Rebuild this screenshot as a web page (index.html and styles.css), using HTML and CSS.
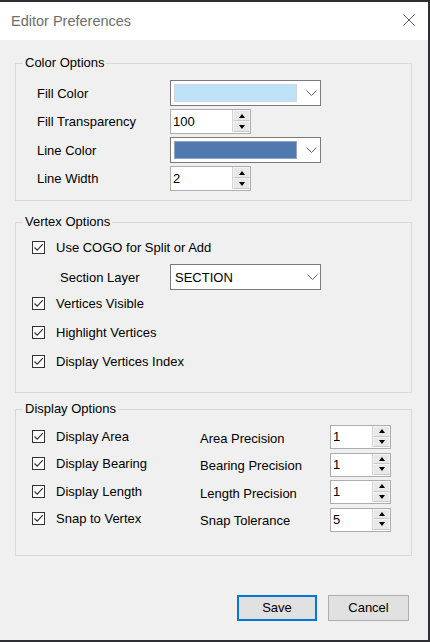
FILE: index.html
```html
<!DOCTYPE html>
<html lang="en">
<head>
<meta charset="utf-8">
<title>Editor Preferences</title>
<link rel="stylesheet" href="styles.css">
</head>
<body>
<div class="window">
  <div class="titlebar">
    <span class="title">Editor Preferences</span>
    <svg class="close" width="12" height="12" viewBox="0 0 12 12"><path d="M0.5 0.5 L11.5 11.5 M11.5 0.5 L0.5 11.5" stroke="#5a5a5a" stroke-width="1" fill="none"/></svg>
  </div>
  <div class="content">
    <fieldset class="group">
      <legend>Color Options</legend>
      <div class="color-grid">
        <span class="lbl">Fill Color</span>
        <div class="combo"><span class="swatch swatch-fill"></span><svg class="chev" width="11" height="6" viewBox="0 0 11 6"><path d="M0.5 0.5 L5.5 5.5 L10.5 0.5" stroke="#606060" fill="none"/></svg></div>
        <span class="lbl">Fill Transparency</span>
        <div class="spin spin-wide"><span class="spin-val">100</span><div class="spin-btns"><span class="sb"><i class="tri-up"></i></span><span class="sb"><i class="tri-down"></i></span></div></div>
        <span class="lbl">Line Color</span>
        <div class="combo"><span class="swatch swatch-line"></span><svg class="chev" width="11" height="6" viewBox="0 0 11 6"><path d="M0.5 0.5 L5.5 5.5 L10.5 0.5" stroke="#606060" fill="none"/></svg></div>
        <span class="lbl">Line Width</span>
        <div class="spin spin-wide"><span class="spin-val">2</span><div class="spin-btns"><span class="sb"><i class="tri-up"></i></span><span class="sb"><i class="tri-down"></i></span></div></div>
      </div>
    </fieldset>

    <fieldset class="group group-vertex">
      <legend>Vertex Options</legend>
      <div class="vertex-body">
        <div class="check-row"><span class="cb"><svg width="11" height="11" viewBox="0 0 11 11"><path d="M1.5 5.5 L4.2 8.2 L9.8 2.2" stroke="#333" stroke-width="1.2" fill="none"/></svg></span><span>Use COGO for Split or Add</span></div>
        <div class="layer-row"><span class="lbl-layer">Section Layer</span><div class="combo combo-text"><span class="combo-val">SECTION</span><svg class="chev" width="11" height="6" viewBox="0 0 11 6"><path d="M0.5 0.5 L5.5 5.5 L10.5 0.5" stroke="#606060" fill="none"/></svg></div></div>
        <div class="check-row after-layer"><span class="cb"><svg width="11" height="11" viewBox="0 0 11 11"><path d="M1.5 5.5 L4.2 8.2 L9.8 2.2" stroke="#333" stroke-width="1.2" fill="none"/></svg></span><span>Vertices Visible</span></div>
        <div class="check-row spaced"><span class="cb"><svg width="11" height="11" viewBox="0 0 11 11"><path d="M1.5 5.5 L4.2 8.2 L9.8 2.2" stroke="#333" stroke-width="1.2" fill="none"/></svg></span><span>Highlight Vertices</span></div>
        <div class="check-row spaced"><span class="cb"><svg width="11" height="11" viewBox="0 0 11 11"><path d="M1.5 5.5 L4.2 8.2 L9.8 2.2" stroke="#333" stroke-width="1.2" fill="none"/></svg></span><span>Display Vertices Index</span></div>
      </div>
    </fieldset>

    <fieldset class="group group-display">
      <legend>Display Options</legend>
      <div class="display-grid">
        <div class="check-row"><span class="cb"><svg width="11" height="11" viewBox="0 0 11 11"><path d="M1.5 5.5 L4.2 8.2 L9.8 2.2" stroke="#333" stroke-width="1.2" fill="none"/></svg></span><span>Display Area</span></div>
        <span class="lbl">Area Precision</span>
        <div class="spin spin-narrow"><span class="spin-val">1</span><div class="spin-btns"><span class="sb"><i class="tri-up"></i></span><span class="sb"><i class="tri-down"></i></span></div></div>

        <div class="check-row"><span class="cb"><svg width="11" height="11" viewBox="0 0 11 11"><path d="M1.5 5.5 L4.2 8.2 L9.8 2.2" stroke="#333" stroke-width="1.2" fill="none"/></svg></span><span>Display Bearing</span></div>
        <span class="lbl">Bearing Precision</span>
        <div class="spin spin-narrow"><span class="spin-val">1</span><div class="spin-btns"><span class="sb"><i class="tri-up"></i></span><span class="sb"><i class="tri-down"></i></span></div></div>

        <div class="check-row"><span class="cb"><svg width="11" height="11" viewBox="0 0 11 11"><path d="M1.5 5.5 L4.2 8.2 L9.8 2.2" stroke="#333" stroke-width="1.2" fill="none"/></svg></span><span>Display Length</span></div>
        <span class="lbl">Length Precision</span>
        <div class="spin spin-narrow"><span class="spin-val">1</span><div class="spin-btns"><span class="sb"><i class="tri-up"></i></span><span class="sb"><i class="tri-down"></i></span></div></div>

        <div class="check-row"><span class="cb"><svg width="11" height="11" viewBox="0 0 11 11"><path d="M1.5 5.5 L4.2 8.2 L9.8 2.2" stroke="#333" stroke-width="1.2" fill="none"/></svg></span><span>Snap to Vertex</span></div>
        <span class="lbl">Snap Tolerance</span>
        <div class="spin spin-narrow"><span class="spin-val">5</span><div class="spin-btns"><span class="sb"><i class="tri-up"></i></span><span class="sb"><i class="tri-down"></i></span></div></div>
      </div>
    </fieldset>

    <div class="actions">
      <button class="btn btn-default">Save</button>
      <button class="btn">Cancel</button>
    </div>
  </div>
</div>
</body>
</html>
```

FILE: styles.css
```css
html, body {
  margin: 0;
  padding: 0;
}
body {
  width: 430px;
  height: 642px;
  overflow: hidden;
  background: #2e2f33;
  font-family: "Liberation Sans", Arial, sans-serif;
  font-size: 13px;
  color: #000;
}
.window {
  margin-top: 2px;
  width: 428px;
  height: 638px;
  background: #f0f0f0;
  display: flex;
  flex-direction: column;
}
.titlebar {
  height: 38px;
  flex: none;
  background: #fff;
  display: flex;
  align-items: center;
  justify-content: space-between;
  padding: 0 13px 0 11px;
}
.title {
  font-size: 14.5px;
  color: #6e6e6e;
}
.close {
  display: block;
  margin-top: -2px;
}
.content {
  padding: 16px 16px 0 15px;
}
.group {
  margin: 0;
  padding: 0;
  border: 1px solid #d9d9d9;
  min-inline-size: 0;
}
.group legend {
  margin-left: 7px;
  padding: 0 2px;
  font-size: 13px;
  line-height: 14px;
}
.group-vertex {
  margin-top: 14px;
}
.group-display {
  margin-top: 9px;
}
.color-grid {
  display: grid;
  grid-template-columns: 133px auto;
  grid-template-rows: 26px 25px 26px 25px;
  row-gap: 3px;
  align-items: center;
  justify-items: start;
  padding: 10px 0 9px 21px;
}
.lbl {
  white-space: nowrap;
}
.combo {
  box-sizing: border-box;
  width: 151px;
  height: 26px;
  border: 1px solid #7a7a7a;
  background: #fff;
  display: flex;
  align-items: center;
  padding: 0 0 0 3px;
}
.swatch {
  box-sizing: border-box;
  width: 123px;
  height: 18px;
  border: 1px solid #cfd6dc;
}
.swatch-fill {
  background: #bee3f9;
}
.swatch-line {
  background: #5179af;
  border-color: #8fa6c6;
}
.chev {
  display: block;
  margin-left: 9px;
}
.combo-text .combo-val {
  width: 123px;
  padding-left: 1px;
}
.spin {
  box-sizing: border-box;
  height: 25px;
  border: 1px solid #adadad;
  background: #fff;
  display: flex;
}
.spin-wide {
  width: 81px;
}
.spin-narrow {
  width: 61px;
  height: 24px;
}
.spin-val {
  flex: 1;
  padding-left: 2px;
  line-height: 23px;
}
.spin-narrow .spin-val {
  line-height: 22px;
}
.spin-btns {
  width: 17px;
  display: flex;
  flex-direction: column;
  margin: 0 0 1px 0;
  border-left: 1px solid #d4d4d4;
}
.sb {
  flex: 1;
  background: #e8e8e8;
  border: 1px solid #f4f4f4;
  border-bottom-color: #c9c9c9;
  display: flex;
  align-items: center;
  justify-content: center;
}
.tri-up {
  width: 0;
  height: 0;
  border-left: 3.5px solid transparent;
  border-right: 3.5px solid transparent;
  border-bottom: 4px solid #000;
}
.tri-down {
  width: 0;
  height: 0;
  border-left: 3.5px solid transparent;
  border-right: 3.5px solid transparent;
  border-top: 4px solid #000;
}
.vertex-body {
  display: flex;
  flex-direction: column;
  padding: 8px 0 21px 16px;
}
.check-row {
  height: 20px;
  display: flex;
  align-items: center;
  gap: 11px;
  white-space: nowrap;
}
.cb {
  box-sizing: border-box;
  width: 13px;
  height: 13px;
  border: 1px solid #333;
  background: #fff;
  display: flex;
  align-items: center;
  justify-content: center;
  flex: none;
}
.cb svg {
  display: block;
}
.layer-row {
  margin-top: 7px;
  padding-left: 28px;
  display: flex;
  align-items: center;
}
.lbl-layer {
  width: 110px;
}
.after-layer {
  margin-top: 3px;
}
.spaced {
  margin-top: 9px;
}
.display-grid {
  display: grid;
  grid-template-columns: 168px 130px 61px;
  grid-auto-rows: 24px;
  row-gap: 3.5px;
  align-items: center;
  padding: 9px 0 23px 16px;
}
.display-grid .lbl {
  padding-top: 2px;
}
.display-grid .check-row {
  margin-top: -2px;
}
.actions {
  display: flex;
  justify-content: flex-end;
  gap: 11px;
  margin-top: 39px;
  padding-right: 3px;
}
.btn {
  box-sizing: border-box;
  width: 81px;
  height: 26px;
  margin: 0;
  padding: 0;
  font-family: "Liberation Sans", Arial, sans-serif;
  font-size: 13px;
  color: #000;
  background: #e1e1e1;
  border: 1px solid #adadad;
}
.btn-default {
  width: 80px;
  border: 2px solid #0078d7;
}
```
